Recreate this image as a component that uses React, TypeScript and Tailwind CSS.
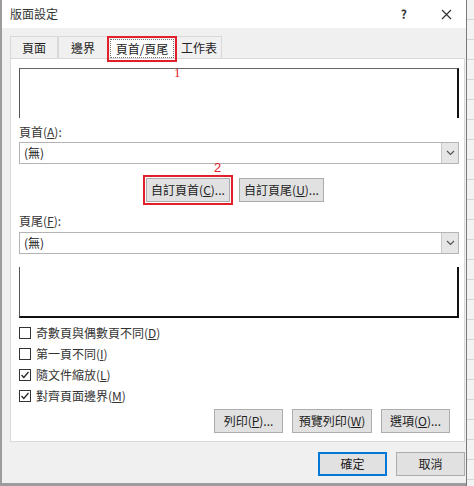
import React from 'react';

const font = { fontFamily: '"Noto Sans CJK TC", "Noto Sans", sans-serif' };

// label like "列印(P)..." -> underline the letter inside the brackets
const Mnemonic: React.FC<{ text: string }> = ({ text }) => {
    const m = text.match(/^(.*\()(\w)(\).*)$/);
    if (!m) return <>{text}</>;
    return (
        <>
            {m[1]}
            <span className="underline">{m[2]}</span>
            {m[3]}
        </>
    );
};

const Chevron: React.FC = () => (
    <svg width="9" height="6" viewBox="0 0 9 6" fill="none">
        <path d="M1 1l3.5 3.5L8 1" stroke="#555" strokeWidth="1.2" />
    </svg>
);

const Select: React.FC = () => (
    <div className="flex h-[22px] w-[440px] border border-[#b4b4b4] bg-white">
        <div className="flex-1 pl-[4px] text-[12px] leading-[20px] text-[#222]">(無)</div>
        <div className="flex w-[17px] items-center justify-center border-l border-[#c8c8c8] bg-[#e6e6e6]">
            <Chevron />
        </div>
    </div>
);

const Btn: React.FC<{ label: string; w: string; primary?: boolean }> = ({ label, w, primary }) => (
    <div
        className={`flex h-[24px] ${w} items-center justify-center bg-[#e1e1e1] text-[12px] text-[#222] ${
            primary ? 'border-2 border-[#0078d7]' : 'border border-[#adadad]'
        }`}
    >
        <Mnemonic text={label} />
    </div>
);

const Check: React.FC<{ label: string; checked?: boolean }> = ({ label, checked }) => (
    <div className="flex h-[21px] items-center gap-[5px]">
        <div className="flex h-[12px] w-[12px] items-center justify-center border border-[#333] bg-white">
            {checked && (
                <svg width="10" height="10" viewBox="0 0 10 10" fill="none">
                    <path d="M1.5 5l2.3 2.5L8.5 2" stroke="#222" strokeWidth="1.2" />
                </svg>
            )}
        </div>
        <span className="text-[12px] text-[#333]">
            <Mnemonic text={label} />
        </span>
    </div>
);

const App: React.FC = () => {
    const tabs = ['頁面', '邊界', '頁首/頁尾', '工作表'];

    return (
        <div className="flex h-[486px] w-[474px] overflow-hidden bg-[#9c9c9c]" style={font}>
            {/* Dialog */}
            <div className="ml-[2px] flex h-[483px] w-[464px] flex-col bg-[#f0f0f0]">
                {/* Title bar */}
                <div className="flex h-[28px] items-center bg-white pl-[8px] pr-[14px]">
                    <span className="text-[12px] text-[#333]">版面設定</span>
                    <span className="ml-auto mr-[34px] text-[12px] font-bold text-[#333]">?</span>
                    <svg width="11" height="11" viewBox="0 0 11 11">
                        <path d="M1 1l9 9M10 1l-9 9" stroke="#333" strokeWidth="1.2" />
                    </svg>
                </div>

                {/* Tabs */}
                <div className="relative mt-[8px] flex h-[22px] items-start pl-[8px]">
                    {tabs.map((t, i) =>
                        i === 2 ? (
                            <div key={t} className="relative z-10 -ml-[1px] h-[26px] border-2 border-[#e2202b] p-[1px]">
                                <div className="flex h-[19px] w-[64px] items-center justify-center border border-dotted border-[#777] bg-white text-[12px] text-[#222]">
                                    {t}
                                </div>
                            </div>
                        ) : (
                            <div
                                key={t}
                                className={`flex h-[22px] items-center justify-center border border-b-0 border-[#d9d9d9] bg-[#f0f0f0] text-[12px] text-[#222] ${
                                    i === 0 ? 'w-[48px]' : i === 1 ? 'w-[50px]' : '-ml-[1px] w-[46px]'
                                }`}
                            >
                                {t}
                            </div>
                        )
                    )}
                    <span className="absolute left-[172px] top-[30px] z-20 text-[13px] leading-none text-[#e2202b]" style={{ fontFamily: '"Liberation Serif", serif' }}>
                        1
                    </span>
                </div>

                {/* Panel */}
                <div className="ml-[8px] flex h-[384px] w-[455px] flex-col border border-[#d9d9d9] bg-white px-[8px]">
                    <div className="mt-[9px] h-[50px] w-[440px] border-l border-t border-r-2 border-l-[#555] border-t-[#666] border-r-[#111]" />

                    <div className="mt-[6px] text-[12px] leading-[16px] text-[#333]">
                        頁首(<span className="underline">A</span>):
                    </div>
                    <div className="mt-[2px]">
                        <Select />
                    </div>

                    <div className="relative mt-[11px] flex justify-center gap-[6px] pr-[8px]">
                        <span className="absolute left-[195px] -top-[14px] text-[13px] leading-none text-[#e2202b]" style={{ fontFamily: '"Liberation Sans", sans-serif' }}>
                            2
                        </span>
                        <div className="border-2 border-[#e2202b] p-[1px]">
                            <Btn label="自訂頁首(C)..." w="w-[84px]" />
                        </div>
                        <div className="pt-[3px]">
                            <Btn label="自訂頁尾(U)..." w="w-[85px]" />
                        </div>
                    </div>

                    <div className="mt-[8px] text-[12px] leading-[16px] text-[#333]">
                        頁尾(<span className="underline">F</span>):
                    </div>
                    <div className="mt-[3px]">
                        <Select />
                    </div>

                    <div className="mt-[13px] h-[51px] w-[440px] border-b-2 border-l border-r-2 border-b-[#111] border-l-[#555] border-r-[#111]" />

                    <div className="mt-[4px] flex flex-col">
                        <Check label="奇數頁與偶數頁不同(D)" />
                        <Check label="第一頁不同(I)" />
                        <Check label="隨文件縮放(L)" checked />
                        <Check label="對齊頁面邊界(M)" checked />
                    </div>

                    <div className="mt-[3px] flex justify-end gap-[9px] pr-[6px]">
                        <Btn label="列印(P)..." w="w-[69px]" />
                        <Btn label="預覽列印(W)" w="w-[80px]" />
                        <Btn label="選項(O)..." w="w-[69px]" />
                    </div>
                </div>

                {/* Footer buttons */}
                <div className="mt-[10px] flex justify-end gap-[9px] pr-[1px]">
                    <Btn label="確定" w="w-[69px]" primary />
                    <Btn label="取消" w="w-[69px]" />
                </div>
            </div>

            {/* Sheet behind the dialog */}
            <div className="flex w-[8px] flex-col border-l border-[#7a7a7a] bg-[#f3f3f3]">
                {Array.from({ length: 24 }).map((_, i) => (
                    <div key={i} className="h-[20px] border-b border-[#d4d4d4]" />
                ))}
            </div>
        </div>
    );
};

export default App;
